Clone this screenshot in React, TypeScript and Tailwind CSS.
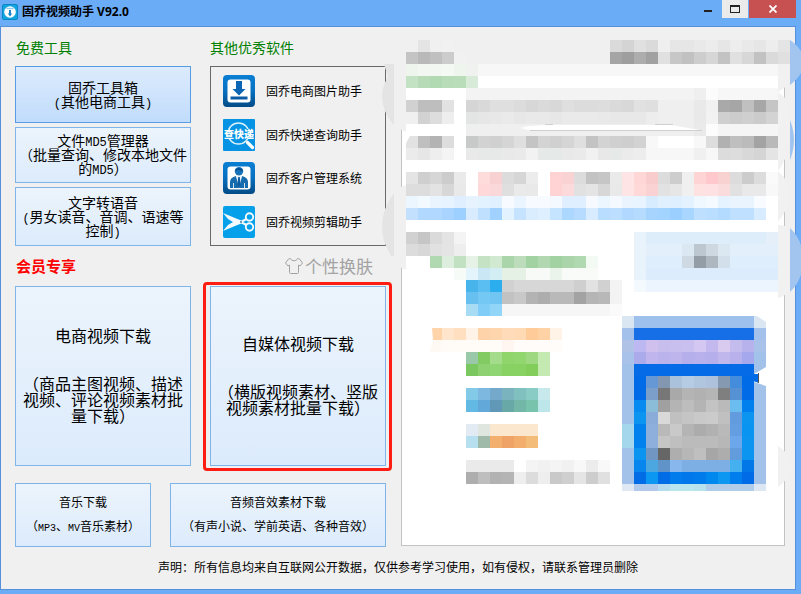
import type { ReactNode } from "react";

const cjk = "font-['Noto_Sans_CJK_SC',sans-serif]";

/* Half-width characters, set narrower than the Han glyphs beside them. */
function Half({ children, small = false }: { children: ReactNode; small?: boolean }) {
  return (
    <span className={`font-['Liberation_Mono',monospace] ${small ? "text-[10px] leading-[0px]" : "text-xs leading-[0px]"}`}>
      {children}
    </span>
  );
}

function Tile({ className, children, strong = false }: { className: string; children: ReactNode; strong?: boolean }) {
  const look = strong
    ? "border-[#569de5] from-[#dcebfc] to-[#c1dcfc]"
    : "border-[#7eb4ea] from-[#ecf4fc] to-[#dcebfc]";
  return (
    <button type="button" className={`flex flex-col items-center justify-center border bg-linear-to-b pb-[2px] text-center whitespace-nowrap text-black ${look} ${className}`}>
      {children}
    </button>
  );
}

function AppIcon() {
  return (
    <svg width="16" height="16" viewBox="0 0 16 16" aria-hidden="true">
      <rect x="0.5" y="0.5" width="15" height="15" rx="1.5" fill="#12a5e0" stroke="#0b86c4" />
      <circle cx="8" cy="8" r="5.8" fill="#fff" />
      <path d="M4.500 4.500h7" stroke="#8cc9ec" strokeWidth="1.4" />
      <path d="M8 6v4" stroke="#1b86c9" strokeWidth="2" />
      <path d="M5.800 9.500h4.400L8 12.400z" fill="#1b86c9" />
    </svg>
  );
}

function BlueFrame({ id }: { id: string }) {
  return (
    <>
      <defs>
        <linearGradient id={id} x1="0" y1="0" x2="0" y2="1">
          <stop offset="0" stopColor="#0a7fd3" />
          <stop offset="0.5" stopColor="#0870c0" />
          <stop offset="1" stopColor="#024b86" />
        </linearGradient>
      </defs>
      <rect width="32" height="32" rx="4" fill={`url(#${id})`} />
      <rect x="4.5" y="4.5" width="23" height="23" rx="3" fill="#fff" />
    </>
  );
}

function DownloadIcon() {
  return (
    <svg width="32" height="32" viewBox="0 0 32 32" aria-hidden="true">
      <BlueFrame id="dl" />
      <path d="M13 6h6v8h3.500L16 20.500 9.500 14H13z" fill="#0a66b4" />
      <path d="M7.5 21.5h17v3h-17z" fill="#0a5ba4" />
    </svg>
  );
}

function ExpressIcon() {
  return (
    <svg width="32" height="32" viewBox="0 0 32 32" aria-hidden="true">
      <rect width="32" height="32" rx="1" fill="#0793e3" />
      <circle cx="15.5" cy="14.5" r="10.5" fill="none" stroke="#d9f0fc" strokeWidth="1.5" />
      <rect x="1" y="10" width="30" height="9.5" fill="#0793e3" />
      <path d="M24.500 23.500l5 5" stroke="#fff" strokeWidth="3.2" strokeLinecap="round" />
      <text x="16" y="18.5" textAnchor="middle" fontSize="10" fontWeight="900" fill="#fff" className={cjk}>查快递</text>
    </svg>
  );
}

function CustomerIcon() {
  return (
    <svg width="32" height="32" viewBox="0 0 32 32" aria-hidden="true">
      <BlueFrame id="cu" />
      <circle cx="16" cy="9.3" r="4.2" fill="#1673ba" />
      <path d="M12 9c1-4 7-4 8 0-3 0-3-1-5-1-1 0-2 1-3 1z" fill="#074f91" />
      <path d="M7 26v-6c0-3 2-5 6-6l3 9 3-9c4 1 6 3 6 6v6z" fill="#176cae" />
      <path d="M13 14l3 12 3-12z" fill="#e7f3fb" />
      <path d="M15.200 15h1.600l.8 8-1.600 3-1.600-3z" fill="#0c5da2" />
      <path d="M10.5 21v5M21.5 21v5" stroke="#fff" strokeWidth="0.8" />
    </svg>
  );
}

function ScissorsIcon() {
  return (
    <svg width="32" height="32" viewBox="0 0 32 32" aria-hidden="true">
      <rect width="32" height="32" rx="2" fill="#05a0ea" />
      <path d="M0 7l18 7.500 2 1.500-2 1.500L0 25l5-6 5-3-5-3z" fill="#f4fbff" />
      <path d="M15 14.500l8.500 4.500M15 17.500l8.500-4.500" stroke="#f4fbff" strokeWidth="2.2" />
      <circle cx="26.5" cy="11" r="3.700" fill="none" stroke="#f4fbff" strokeWidth="1.900" />
      <circle cx="26.5" cy="21" r="3.700" fill="none" stroke="#f4fbff" strokeWidth="1.900" />
      <circle cx="18" cy="16" r="1" fill="#4c7fa3" />
    </svg>
  );
}

function ShirtIcon() {
  return (
    <svg width="18" height="18" viewBox="0 0 18 18" fill="none" stroke="#a3a3a3" aria-hidden="true">
      <path d="M5.5 1.5c1 3 6 3 7 0l2 .5 3 4-2.5 3-1.5-1v7.500q0 1-1 1h-7q-1 0-1-1V8L3 9 .5 6l3-4z" />
    </svg>
  );
}

/* Each run is "row column colours"; a two-digit colour is a grey, "n*c" repeats c. */
const runs = [
  "0 1 e4", "0 3 f1", "0 17 da d4 e0 da ef 2*e6 e9 ec e6 ed e9 e6 ed e4",
  "1 0 c4 b9 c0 cc f1", "1 17 a5 9e ad a1 e0 c7 c1 cd d6 c3 e0 d7 c2 da e0",
  "2 0 eef5ed 2*f2f8f1 f4f9f3 edf5ec f0f2ef 25*f7",
  "3 0 c3e1c3 b6dbb6 b1d9b2 b8dcb8 b9dcb9 d8ead8 25*ff",
  "4 0 5*ff 19*f3 ef fc 5*f7",
  "5 0 d1 be be e2 ff d5 d9 df df dc d7 da d8 df dc dc dd da d8 e1 df 3*ef e9 f1 a9 a6 c0 a7 c5",
  "6 0 f0 d2 dd ee ff e3e5e5 e6 e8 ea e7 e9 e9 e7 3*ea e9 e8 e8 e8 ed 3*ef e9 f2 cf cc cf cb d3",
  "7 0 5*ff 19*ef ea fc 5*f5",
  "8 0 e2 bf b3 dd ff c7cac9 d2 d0 d5 df c4 d3 d0 d5 df c3 d3 d0 ce d2 f8 3*ff f8 dd b1 bf bb a3 b9",
  "9 0 eb e6 ee f4 ff e9 2*e6e9e8 e9 ea f2 2*e5e9e8 e9 ea f1 e8 e5e9e8 eb ed 4*f7 f0 f7 dc dd d8 d5 e4",
  "10 0 31*ff",
  "11 0 e4 cf d6 cc ea ff ffdcdc f8d2d2 dc d6 ec ff ffd2d3 f9d3d4 dc c3 c6 ea fee4e4 ffd7d7 f8cccd dc cd f0 ffd4d4 ffc9cb f8d1d1 dc cc dc fa",
  "12 0 dd dd e3 d7 e9 ff ffd9da fad8d9 df ea e9 ff ffd2d3 fcd9da e1 e4 d7 e9 fee4e4 ffd8d8 fbd2d4 e2 e6 f0 fee2e2 fee1e2 fadcdc e1 e9 e9 f8",
  "13 0 ecf6ff f3faff e9f4fe e7f3ff dfefff e6f3ff e3f2ff e0f0ff f7fbff ebf5ff f7fbff f7fbff f3f9ff dfefff dfefff f6faff ecf6ff f3f9ff e9f4ff e8f4ff d8ecff e0f0ff deefff e4f2ff f0f8ff f4faff e5f2ff 2*e9f4ff f8fbff ff",
  "14 0 c3e1ff b1d9ff b1d9ff a9d4ff 9dd0ff d9ecff c0e0ff a1d2ff e3f2ff c5e3ff d9edff def0ff c5e4ff acd7ff b6dbff d9ecff b8ddff bcdfff b1d9ff b5dbff a7d4ff a3d3ff 9bcfff a9d6ff bfdfff badeff b3daff c0e0ff c0e0ff d8ecff ff",
  "15 0 31*ff",
  "16 0 d1 c6 da e4 f4", "16 19 e8f3fc 10*deedfa e4effa",
  "17 0 dc d8 e1 e4 ee", "17 19 e8f3fc 3*e3effb dbe8f2 bdc7d0 cdd8e1 dbe7f1 4*e3effb",
  "18 2 b1d9b1 ddeedf c2e1c2 e6f2e6 c5e2c5 d1e8d1 aad4aa bcdcbc a2d1a2 b1d8b1 a2d1a2 aad5aa b1d9b1 f3f9f3",
  "18 19 e8f3fc 3*dfeefc ced9e4 949da5 aeb7c0 d3e0ec 4*dfeefc",
  "19 4 f7fbf7 e3f4fd c9e7f5 d2edf4 2*e6f1e6 2*f7faf7 ebf4eb 3*f8fbf8", "19 19 e8f3fc 11*dcecfc",
  "20 5 47b4ec 5bbef2 2caeee d1 5*d7 cf e2 d1 f3", "20 19 f4f9fe 11*ecf5fe",
  "21 5 68c0f0 73c8f4 70c5f3 c2 c8 b3 ad b9 b9 a3 b5 b8 f3",
  "22 5 a8dcf5 80cdf7 91d5f8 9*f6 fa",
  "23 18 dbe6f3 10*9dc0ec dbe6f3",
  "24 2 ffd4ab ffe5cb ffdfc0 fff2e7 ffd3a9 ffd5ae ffdbb9 ffdab5 ffcb98 ffd2a6 fff3e7", "24 18 a3c1ea 10*176fe8 a3c1ea",
  "25 2 fff9f3 5*fffcf8 fff6f1 4*fffcf9", "25 18 b1c2e7 bdb8f1 cfc0ee c8beee c9bfee cac0ef d4c8f3 c4b9ef d9caf0 c5bcee b7b2ec a9c2e9",
  "26 5 99c9a8 82ca62 a5dc8b 90d56c 92d670 9ed982 c4e9b1", "26 18 a9c2e9 abaaea c0b6ed bbb3ec beb5ed b5afec b8b1ec b5b0ec c0b7ed b8b1ec a5a8ec a3c2e9",
  "27 5 7bc860 8dd173 90d573 88d163 88d163 83ce5a c4e9b1", "27 18 a3c2e9 10*056be7 a3c2e9",
  "28 18 a3c2e9 006be7 6598d5 8398b0 abc2dd b6cce4 b0c6de aec1dd 8599b0 448ddd 006be7 a3c2e9",
  "29 5 83c9e8 7db8e1 75a9cb 7ab3bd 80c1c0 88ccc5 c7e9ec", "29 18 a3c2e9 006be7 7b9fc9 77 a9 b4 b1 b5 7f 5691d3 006be7 a3c2e9",
  "30 5 62b9e3 62a9d9 6198b7 68a9a8 72b7a8 77c3ac bce6e9", "30 18 a3c2e9 078bf0 8bbdd9 a0 b4 bd b4 c3 ba 6abdee 0080ee a3c2e9",
  "31 18 a3c2e9 0b95f1 8bacd9 d9 c0 c5 c9 cb c0 639bdf 0b95f1 a3c2e9",
  "32 5 e2ebf4 dfe6df 4*fbe7cd", "32 18 a5d7ec 0081ee 8eafdb b9 c9 b4 ac b1 b9 649de0 0a94f1 a3c2e9",
  "33 5 b6e0f0 a0baa9 f3af6e f0a366 f3ae6d f3bc78", "33 18 a5d7ec 0081ee 8eafdb c5 bf 3*bb b7 6ca7eb 0b95f1 a3c2e9",
  "34 18 a3c2e9 0b95f1 7196c2 66 ae b7 bf a6 ad 639cdd 0b95f1 a3c2e9",
  "35 5 4*ea ff f4 f1 f4 f1 f8 ec f8", "35 18 a3c2e9 0787ed 4ca6df 6093c7 87b7ed 4*7daee4 44b0ef 0278e8 a3c2e9",
  "36 5 ae be b2 b4 ee dc ee c9 cf e5 cd e0", "36 18 a3c2e9 006de7 0b97f2 006de7 007cec 0077eb 007bec 0088ee 0b97f2 007eee 006be7 a3c2e9",
  "37 18 dfe8f3 2*b1c9ea b5dbee 2*b8e5ee b8e1ee 4*b1cce9 dde6f3",
];

function toCells(run: string) {
  const [row, start, ...parts] = run.split(" ");
  const colours = parts.flatMap((part) => {
    const [a, b] = part.split("*");
    return b ? Array<string>(Number(a)).fill(b) : [a];
  });
  return colours.map((c, i) => ({
    x: 406 + (Number(start) + i) * 12,
    y: 40 + Number(row) * 12,
    h: row === "37" ? 7 : 12,
    fill: c.length === 2 ? `#${c}${c}${c}` : `#${c}`,
  }));
}
const cells = runs.flatMap(toCells);

/* The pixelated preview, with the brush marks that spill over its edges. */
function Mosaic() {
  return (
    <svg className="pointer-events-none absolute top-0 -left-5" width="420" height="512" viewBox="381 38 420 512" aria-hidden="true">
      <path d="M394 40h12v92l-12-6zM394 190l12-5v85l-12-6z" fill="#f0f0f0" />
      <g shapeRendering="crispEdges">
        {cells.map((c) => (
          <rect key={`${c.x}-${c.y}`} x={c.x} y={c.y} width="12" height={c.h} fill={c.fill} />
        ))}
      </g>
      <path d="M384 64h10v61q-12-13-12-29 0-9 6-19zM394 193q-12 16-12 33 0 12 4 20l5 10h3z" fill="#e4e4e4" />
      <path d="M410 136q-8 12-8 27 0 14 4 22V136z" fill="#fff" />
      <path d="M520 128l8-2 20-1h124l16 3 15 2.500H530z" fill="#fff" />
      <path d="M530 130.500h172M545 124.500h8M655 124.500h18" stroke="#cfcfcf" />
      <path d="M778 40h12v44l-12 8zM778 92l7 6q5 12 5 32 0 22-9 37l-3 4zM778 171l6 6q4 8 4 18 0 12-5 20l-5 7zM778 225q12 0 12 8v56q-4 7-12 9zM778 446q13 8 13 20t-13 21z" fill="#f1f1f1" />
      <path d="M778 40h12v12h-12z" fill="#e4e4e4" />
      <path d="M778 52h12v12h-12z" fill="#e0e0e0" />
      <path d="M790 40q14 10 14 22t-14 23zM790 120q4 10 4 20t-4 20zM790 228q13 12 13 32t-13 32z" fill="#a1c5ef" />
      <path d="M754 374l12-7v19l-12-4z" fill="#fff" />
      <path d="M753 374h6v9l-6-2z" fill="#006be7" />
      <path d="M758.500 373v10" stroke="#555" />
      <path d="M757 316h9v6z" fill="#fff" />
      <path d="M430 328h2l1 12-3 12z" fill="#fff" />
    </svg>
  );
}

const software = [
  { name: "固乔电商图片助手", icon: <DownloadIcon /> },
  { name: "固乔快递查询助手", icon: <ExpressIcon /> },
  { name: "固乔客户管理系统", icon: <CustomerIcon /> },
  { name: "固乔视频剪辑助手", icon: <ScissorsIcon /> },
];

export default function App() {
  return (
    <div className={`min-h-screen w-full overflow-hidden bg-[#6bacf7] pr-[5px] pb-1 text-black ${cjk}`}>
      <header className="flex h-[26px] items-start">
        <div className="flex h-6 items-center gap-1 pl-[2px]">
          <AppIcon />
          <h1 className="font-['Open_Sans','Noto_Sans_CJK_SC',sans-serif] text-xs font-bold">固乔视频助手 V92.0</h1>
        </div>
        <div className="ml-auto flex h-[18px] gap-px">
          <button type="button" aria-label="最小化" className="flex w-[26px] items-end justify-center pb-[6px]">
            <span className="h-[2px] w-2 bg-[#222]" />
          </button>
          <button type="button" aria-label="最大化" className="flex w-[26px] items-center justify-center bg-[#ebebeb]">
            <span className="h-2 w-[10px] border border-t-2 border-[#222]" />
          </button>
          <button type="button" aria-label="关闭" className="flex w-[47px] items-center justify-center bg-[#c75050]">
            <svg width="8" height="8" viewBox="0 0 8 8" aria-hidden="true">
              <path d="M0.500 0.500l7 7M7.500 0.500l-7 7" stroke="#fff" strokeWidth="1.800" />
            </svg>
          </button>
        </div>
      </header>

      <main className="border border-[#5591db] bg-[#f0f0f0] pt-[11px] pr-[10px] pl-[14px]">
        <div className="flex gap-[15px]">
          <div className="w-[371px] shrink-0">
            <div className="flex justify-between">
              <section className="w-44">
                <h2 className="mb-[10px] pl-px text-sm leading-[18px] text-[#008000]">免费工具</h2>
                <div className="flex flex-col gap-1 text-sm leading-[14px]">
                  <Tile strong className="h-[57px]">
                    <span>固乔工具箱</span>
                    <span><Half>(</Half>其他电商工具<Half>)</Half></span>
                  </Tile>
                  <Tile className="h-14">
                    <span>文件<Half>MD5</Half>管理器</span>
                    <span>（批量查询、修改本地文件</span>
                    <span>的<Half>MD5</Half>）</span>
                  </Tile>
                  <Tile className="h-[59px]">
                    <span>文字转语音</span>
                    <span><Half>(</Half>男女读音、音调、语速等</span>
                    <span>控制<Half>)</Half></span>
                  </Tile>
                </div>
              </section>
              <section className="w-44">
                <h2 className="mb-[10px] text-sm leading-[18px] text-[#008000]">其他优秀软件</h2>
                <ul className="flex h-[180px] flex-col justify-between border border-[#696969] px-3 py-2 pb-[7px]">
                  {software.map((s) => (
                    <li key={s.name}>
                      <a href="#" className="flex items-center gap-[11px] text-xs">
                        {s.icon}
                        {s.name}
                      </a>
                    </li>
                  ))}
                </ul>
              </section>
            </div>

            <div className="flex h-10 items-center justify-between">
              <h2 className="pl-px text-[15px] font-bold text-[#ff0000]">会员专享</h2>
              <button type="button" className="mr-[13px] flex items-center gap-[2px] text-[17px] text-[#a3a3a3]">
                <ShirtIcon />
                个性换肤
              </button>
            </div>

            <div className="flex justify-between text-base leading-4">
              <Tile className="h-[180px] w-44">
                <span className="mb-8">电商视频下载</span>
                <span>（商品主图视频、描述</span>
                <span>视频、评论视频素材批</span>
                <span>量下载）</span>
              </Tile>
              <div className="relative">
                <Tile className="h-[180px] w-44">
                  <span className="mb-8">自媒体视频下载</span>
                  <span>（横版视频素材、竖版</span>
                  <span>视频素材批量下载）</span>
                </Tile>
                <div className="pointer-events-none absolute -top-1 -right-[6px] -bottom-[5px] -left-[7px] rounded-sm border-3 border-[#ff1d13]" />
              </div>
            </div>

            <div className="mt-[17px] flex justify-between text-xs leading-3">
              <Tile className="h-16 w-[136px] gap-3">
                <span>音乐下载</span>
                <span>（<Half small>MP3</Half>、<Half small>MV</Half>音乐素材）</span>
              </Tile>
              <Tile className="h-16 w-[216px] gap-3">
                <span>音频音效素材下载</span>
                <span>（有声小说、学前英语、各种音效）</span>
              </Tile>
            </div>
          </div>

          <section aria-label="预览" className="relative flex-1 pt-8 pb-px">
            <div className="h-full border border-[#c3c3c3] bg-white" />
            <Mosaic />
          </section>
        </div>
        <footer className="pr-1 pb-[2px] text-center text-xs leading-10">
          声明：所有信息均来自互联网公开数据，仅供参考学习使用，如有侵权，请联系管理员删除
        </footer>
      </main>
    </div>
  );
}
